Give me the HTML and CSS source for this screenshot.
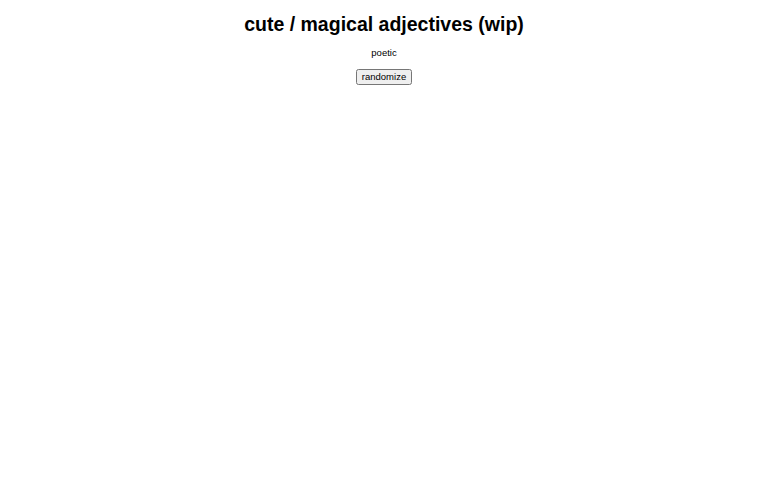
FILE: index.html
```html
<!DOCTYPE html>
<html lang="en">
  <head>
    <meta charset="UTF-8" />
    <title>cute / magical adjectives (wip)</title>
    <link rel="stylesheet" href="styles.css">
  </head>
  <body>
    <h2 class="title">cute / magical adjectives (wip)</h2>

    <!-- the current adjective -->
    <p id="word" class="word">poetic</p>

    <button id="randomize" class="randomize">randomize</button>

    <script>
      const words = ["poetic", "sparkly", "dreamy", "fluffy", "enchanted", "starry", "whimsical", "glimmering"];
      const word = document.getElementById("word");

      document.getElementById("randomize").addEventListener("click", () => {
        word.textContent = words[Math.floor(Math.random() * words.length)];
      });
    </script>
  </body>
</html>
```

FILE: styles.css
```css
body {
  font-family: "Liberation Sans", Arial, sans-serif;
  margin: 8px;
  text-align: center;
  background: #fff;
  color: #000;
}

.title {
  font-size: 19.5px;
  margin: 5px 0 0;
}

.word {
  font-size: 9.5px;
  margin: 11px 0 8px;
}

.randomize {
  font-family: "Liberation Sans", Arial, sans-serif;
  font-size: 9.5px;
  padding: 0 4px 1px;
}
```
